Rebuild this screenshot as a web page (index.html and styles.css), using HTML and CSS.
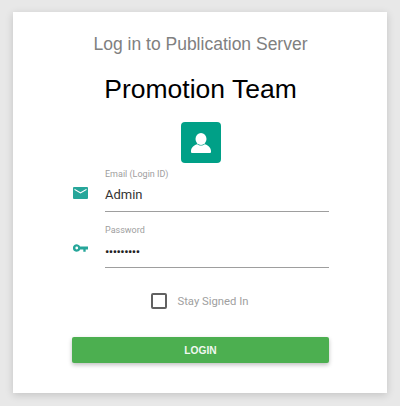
FILE: index.html
```html
<!DOCTYPE html>
<html lang="en">
<head>
<meta charset="utf-8">
<title>Log in</title>
<link rel="stylesheet" href="styles.css">
</head>
<body>
<main class="card">
  <h2 class="subtitle">Log in to Publication Server</h2>
  <h1 class="team">Promotion Team</h1>
  <div class="avatar">
    <svg viewBox="0 0 20 20" width="20" height="20"><ellipse cx="10" cy="6" rx="5.500" ry="6" fill="#fff"/><path d="M1 20a1 1 0 0 1-1-1v-1c0-3.800 3.500-6 6.300-6.800 1 .9 2.300 1.400 3.700 1.400s2.700-.5 3.700-1.400c2.800.8 6.300 3 6.300 6.800v1a1 1 0 0 1-1 1z" fill="#fff"/></svg>
  </div>
  <div class="field field-email">
    <svg class="field-icon" viewBox="0 0 15 12" width="15" height="12"><path d="M1 0h13a1 1 0 0 1 1 1v10a1 1 0 0 1-1 1H1a1 1 0 0 1-1-1V1a1 1 0 0 1 1-1zm6.500 6.500L13.500 3V1.800L7.500 5.200 1.500 1.800V3z" fill="#26a69a" fill-rule="evenodd"/></svg>
    <div class="control">
      <label class="label">Email (Login ID)</label>
      <div class="value">Admin</div>
    </div>
  </div>
  <div class="field field-pass">
    <svg class="field-icon" viewBox="0 0 16 8" width="15" height="8"><path d="M7.600 2.500A4 4 0 1 0 7.600 5.500H11V8h2.500V5.500H16v-3zM4 5.500a1.500 1.500 0 1 1 0-3 1.500 1.500 0 0 1 0 3z" fill="#26a69a" fill-rule="evenodd"/></svg>
    <div class="control">
      <label class="label">Password</label>
      <div class="value dots">•••••••••</div>
    </div>
  </div>
  <div class="stay">
    <span class="box"></span>
    <span class="stay-text">Stay Signed In</span>
  </div>
  <button class="login" type="button">LOGIN</button>
</main>
</body>
</html>
```
FILE: styles.css
```css
html, body { margin: 0; padding: 0; }
body {
  width: 400px;
  height: 406px;
  background: #e8e8e8;
  overflow: hidden;
  font-family: "Liberation Sans", Arial, sans-serif;
}
.card {
  box-sizing: border-box;
  width: 374px;
  height: 381px;
  margin: 12px 0 0 13px;
  padding: 22px 58px 0 59px;
  background: #fff;
  box-shadow: 0 2px 8px rgba(0,0,0,.16);
  display: flex;
  flex-direction: column;
}
.subtitle {
  margin: 0;
  font-size: 17.500px;
  font-weight: 400;
  line-height: 20px;
  color: #808080;
  text-align: center;
}
.team {
  margin: 19px 0 0;
  font-size: 26.500px;
  font-weight: 400;
  line-height: 32px;
  color: #000;
  text-align: center;
}
.avatar {
  width: 40px;
  height: 41px;
  margin: 17px auto 0;
  border-radius: 4px;
  background: #00a087;
  display: flex;
  align-items: center;
  justify-content: center;
}
.field { display: flex; align-items: flex-start; }
.field-email { margin-top: 5px; }
.field-pass { margin-top: 12px; }
.field-icon { flex: none; }
.field-email .field-icon { margin: 19px 17px 0 1px; }
.field-pass .field-icon { margin: 20px 17px 0 1px; }
.control {
  flex: 1;
  border-bottom: 1px solid #9e9e9e;
  height: 43px;
  font-family: Roboto, "Liberation Sans", sans-serif;
}
.label {
  display: block;
  font-size: 9px;
  line-height: 12px;
  color: #9e9e9e;
  font-family: Roboto, "Liberation Sans", sans-serif;
}
.value {
  margin-top: 6px;
  font-size: 13px;
  line-height: 18px;
  color: #333;
}
.dots { color: #222; letter-spacing: -.55px; padding-top: 1px; }
.stay {
  display: flex;
  align-items: center;
  justify-content: center;
  margin-top: 24px;
  gap: 10px;
  padding-right: 1px;
}
.box {
  width: 12px;
  height: 12px;
  border: 2px solid #616161;
  border-radius: 2px;
}
.stay-text { font-size: 11.300px; color: #a0a0a0; line-height: 16px; padding-top: 2px; font-family: Roboto, "Liberation Sans", sans-serif; }
.login {
  margin-top: 27px;
  height: 26px;
  border: 0;
  border-radius: 2px;
  background: #4caf50;
  color: #f1f8f1;
  font-family: "Liberation Sans", sans-serif;
  font-size: 10.200px;
  font-weight: 700;
  box-shadow: 0 2px 4px rgba(0,0,0,.25);
}
```
